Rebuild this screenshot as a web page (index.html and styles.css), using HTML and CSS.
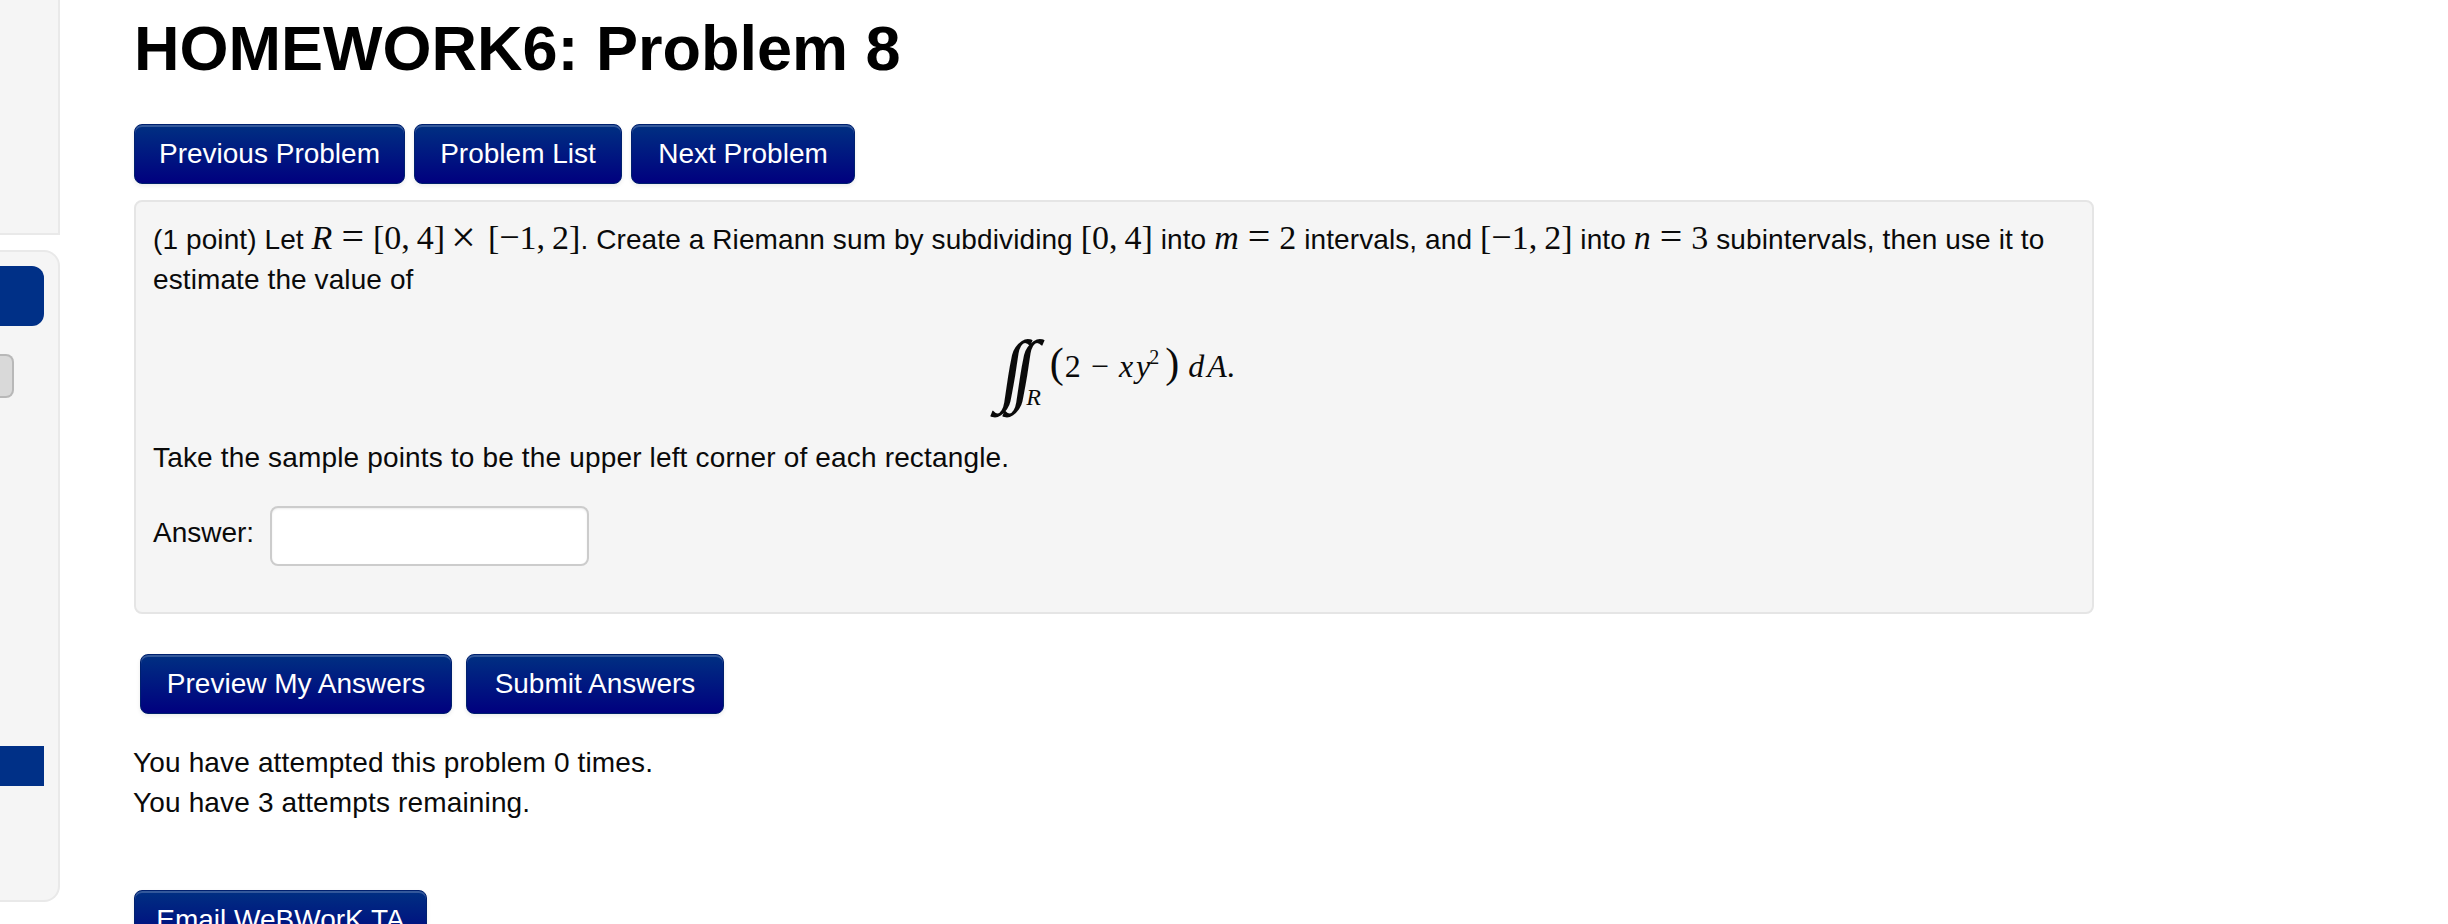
FILE: index.html
```html
<!DOCTYPE html>
<html lang="en">
<head>
<meta charset="utf-8">
<title>HOMEWORK6: Problem 8</title>
<link rel="stylesheet" href="styles.css">
</head>
<body>
<div class="page">
  <aside class="sidebar">
    <div class="panel-top"></div>
    <div class="panel-nav">
      <div class="nav-active"></div>
      <div class="nav-chip"></div>
      <div class="nav-square"></div>
    </div>
  </aside>
  <main class="main">
    <h1 class="title">HOMEWORK6: Problem 8</h1>
    <div class="btn-row">
      <a class="btn btn-prev">Previous Problem</a>
      <a class="btn btn-list">Problem List</a>
      <a class="btn btn-next">Next Problem</a>
    </div>
    <section class="problem">
      <p class="para">(1 point) Let <span class="m"><i>R</i><span class="rel">=</span>[0,<span class="th"></span>4]<span class="bin">×</span>[<span class="neg">−</span>1,<span class="th"></span>2]</span>. Create a Riemann sum by subdividing <span class="m">[0,<span class="th"></span>4]</span> into <span class="m"><i>m</i><span class="rel">=</span>2</span> intervals, and <span class="m">[<span class="neg">−</span>1,<span class="th"></span>2]</span> into <span class="m"><i>n</i><span class="rel">=</span>3</span> subintervals, then use it to estimate the value of</p>
      <div class="display">
        <span class="dint"><span class="dint-a">∫</span><span class="dint-b">∫</span></span><i class="dsub">R</i><span class="dbody"><span class="dparen">(</span>2<span class="dminus">−</span><i class="dxy">xy</i><sup class="dsup">2</sup><span class="dparen dparen-close">)</span><i class="dd">d</i><i class="da">A</i>.</span>
      </div>
      <p class="para para-take">Take the sample points to be the upper left corner of each rectangle.</p>
      <div class="answer-row">
        <label class="answer-label" for="ans">Answer:</label>
        <input class="answer-input" id="ans" type="text">
      </div>
    </section>
    <div class="submit-row">
      <a class="btn btn-preview">Preview My Answers</a>
      <a class="btn btn-submit">Submit Answers</a>
    </div>
    <div class="attempts">
      <div>You have attempted this problem 0 times.</div>
      <div>You have 3 attempts remaining.</div>
    </div>
    <a class="btn btn-email">Email WeBWorK TA</a>
  </main>
</div>
</body>
</html>
```
FILE: styles.css
```css
html, body {
  margin: 0;
  padding: 0;
  height: 924px;
  overflow: hidden;
  background: #fff;
}
body {
  font-family: "Liberation Sans", Arial, sans-serif;
  font-size: 28px;
  line-height: 40px;
  color: #0a0a0a;
}
.page {
  display: flex;
  align-items: flex-start;
  height: 924px;
  overflow: hidden;
}
.sidebar {
  width: 60px;
  flex: none;
  margin-right: 74px;
}
.panel-top {
  height: 233px;
  background: #f5f5f5;
  border-right: 2px solid #e9e9e9;
  border-bottom: 2px solid #e9e9e9;
}
.panel-nav {
  box-sizing: border-box;
  height: 652px;
  margin-top: 15px;
  padding-top: 14px;
  background: #f5f5f5;
  border: 2px solid #e9e9e9;
  border-left: 0;
  border-radius: 0 16px 16px 0;
}
.nav-active {
  width: 44px;
  height: 60px;
  background: #003087;
  border-radius: 0 12px 12px 0;
}
.nav-chip {
  box-sizing: border-box;
  width: 14px;
  height: 44px;
  margin-top: 28px;
  background: #d9d9d9;
  border: 2px solid #b8b8b8;
  border-left: 0;
  border-radius: 0 8px 8px 0;
}
.nav-square {
  width: 44px;
  height: 40px;
  margin-top: 348px;
  background: #003087;
}
.main {
  width: 1960px;
  flex: none;
}
.title {
  margin: 8px 0 36px;
  font-size: 63px;
  line-height: 80px;
  font-weight: 700;
  color: #000;
}
.btn-row {
  display: flex;
  gap: 9px;
  margin-bottom: 16px;
}
.btn {
  display: block;
  box-sizing: border-box;
  height: 60px;
  line-height: 58px;
  text-align: center;
  color: #fff;
  font-size: 28px;
  border: 1px solid #00206e;
  border-radius: 8px;
  background: linear-gradient(to bottom, #003082, #00007f);
  box-shadow: inset 0 2px 0 rgba(255, 255, 255, 0.2), 0 2px 4px rgba(0, 0, 0, 0.08);
}
.btn-prev { width: 271px; }
.btn-list { width: 208px; }
.btn-next { width: 224px; }
.problem {
  box-sizing: border-box;
  height: 414px;
  padding: 18px 17px 0;
  background: #f5f5f5;
  border: 2px solid #e5e5e5;
  border-radius: 8px;
}
.para {
  margin: 0;
  letter-spacing: 0.1px;
}
.para-take {
  letter-spacing: 0.16px;
  margin-top: 1px;
}
.m {
  font-family: "Liberation Serif", "Times New Roman", serif;
  font-size: 34px;
  line-height: 1;
  letter-spacing: 0;
}
.rel {
  font-size: 40px;
  line-height: 0;
  margin: 0 9px;
  vertical-align: -1px;
}
.bin {
  font-size: 44px;
  line-height: 0;
  margin: 0 12px 0 6px;
  vertical-align: -3px;
}
.neg {
  font-size: 36px;
  line-height: 0;
}
.th {
  display: inline-block;
  width: 7px;
}
.display {
  display: flex;
  justify-content: center;
  align-items: flex-start;
  box-sizing: border-box;
  height: 137px;
  padding-left: 14px;
  font-family: "Liberation Serif", "Times New Roman", serif;
  font-size: 32px;
  line-height: 40px;
}
.dint {
  display: flex;
  font-size: 80px;
  line-height: 78px;
  margin-top: 30px;
  margin-left: -5px;
}
.dint-a, .dint-b {
  display: block;
  width: 12px;
  transform: skewX(-9deg);
}
.dsub {
  font-size: 24px;
  line-height: 24px;
  margin-top: 85px;
  margin-left: 0;
}
.dbody {
  margin-top: 43px;
  margin-left: 9px;
  white-space: pre;
}
.dparen {
  font-size: 42px;
  line-height: 40px;
  margin-right: 1px;
}
.dparen-close {
  margin-left: 6px;
  margin-right: 9px;
}
.dminus {
  margin: 0 10px;
}
.dxy {
  letter-spacing: 3px;
}
.dsup {
  font-size: 20px;
  line-height: 0;
  vertical-align: 13px;
  margin-left: -4px;
}
.dd {
  margin-right: 3px;
}
.answer-row {
  display: flex;
  align-items: center;
  margin-top: 28px;
}
.answer-label {
  width: 117px;
  flex: none;
  margin-top: -6px;
}
.answer-input {
  display: block;
  box-sizing: border-box;
  width: 319px;
  height: 60px;
  margin: 0;
  padding: 0;
  background: #fff;
  border: 2px solid #cccccc;
  border-radius: 8px;
  box-shadow: inset 0 1px 2px rgba(0, 0, 0, 0.08);
}
.submit-row {
  display: flex;
  gap: 14px;
  margin: 40px 0 0 6px;
}
.btn-preview { width: 312px; }
.btn-submit { width: 258px; }
.attempts {
  margin-top: 29px;
  letter-spacing: 0.15px;
  margin-left: -1px;
}
.btn-email {
  width: 293px;
  margin-top: 67px;
}
```
